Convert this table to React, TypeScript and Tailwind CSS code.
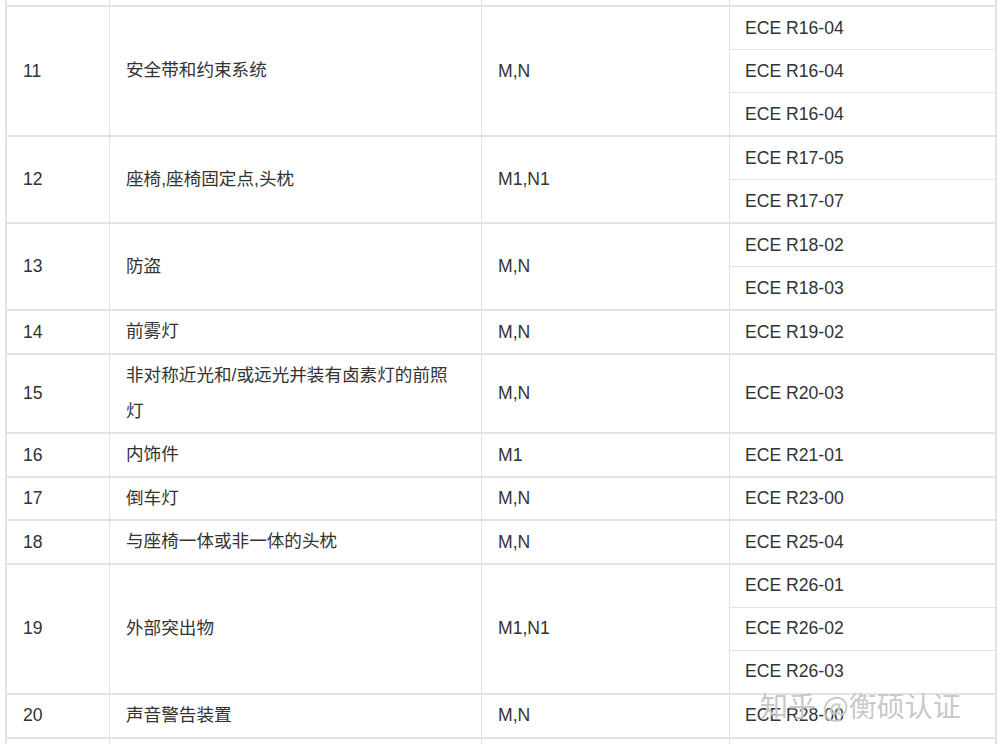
import React from "react";

type Row = { no: string; name: string[]; cat: string; ece: string[]; c?: string };

const rows: Row[] = [
  { no: "11", name: ["安全带和约束系统"], cat: "M,N", ece: ["ECE R16-04", "ECE R16-04", "ECE R16-04"] },
  { no: "12", name: ["座椅,座椅固定点,头枕"], cat: "M1,N1", ece: ["ECE R17-05", "ECE R17-07"] },
  { no: "13", name: ["防盗"], cat: "M,N", ece: ["ECE R18-02", "ECE R18-03"] },
  { no: "14", name: ["前雾灯"], cat: "M,N", ece: ["ECE R19-02"] },
  { no: "15", name: ["非对称近光和/或远光并装有卤素灯的前照", "灯"], cat: "M,N", ece: ["ECE R20-03"] },
  { no: "16", name: ["内饰件"], cat: "M1", ece: ["ECE R21-01"], c: "min-h-[41.5px]" },
  { no: "17", name: ["倒车灯"], cat: "M,N", ece: ["ECE R23-00"], c: "min-h-[41.5px]" },
  { no: "18", name: ["与座椅一体或非一体的头枕"], cat: "M,N", ece: ["ECE R25-04"], c: "min-h-[41.5px]" },
  { no: "19", name: ["外部突出物"], cat: "M1,N1", ece: ["ECE R26-01", "ECE R26-02", "ECE R26-03"] },
  { no: "20", name: ["声音警告装置"], cat: "M,N", ece: ["ECE R28-00"] },
];

const font = { fontFamily: '"Liberation Sans", "Noto Sans CJK SC", Arial, sans-serif' };

function Stub({ h }: { h: string }) {
  return (
    <div className={`flex ${h}`}>
      <div className="w-[103px] border-r border-[#e3e3e3]" />
      <div className="w-[372px] border-r border-[#e3e3e3]" />
      <div className="w-[248px] border-r border-[#e3e3e3]" />
      <div className="w-[265px]" />
    </div>
  );
}

export default function App() {
  return (
    <div className="w-[1006px] h-[744px] overflow-hidden bg-white relative" style={font}>
      <div className="ml-[5px] w-[992px] border-x-2 border-[#e3e3e3] text-[17.6px] text-[#333333]">
        <Stub h="h-[5px]" />
        {rows.map((r) => (
          <div key={r.no} className="flex border-t-2 border-[#e3e3e3]">
            <div className="w-[103px] shrink-0 border-r border-[#e3e3e3] flex items-center pl-[16px]">{r.no}</div>
            <div className="w-[372px] shrink-0 border-r border-[#e3e3e3] flex flex-col justify-center pl-[16px] py-[3px] leading-[35.5px]">
              {r.name.map((n, i) => (
                <div key={i}>{n}</div>
              ))}
            </div>
            <div className="w-[248px] shrink-0 border-r border-[#e3e3e3] flex items-center pl-[16px]">{r.cat}</div>
            <div className="w-[265px] shrink-0 flex flex-col">
              {r.ece.map((e, i) => (
                <div
                  key={i}
                  className={`flex-1 flex items-center pl-[15px] ${i > 0 ? "min-h-[43px] border-t border-[#e3e3e3]" : r.c ?? "min-h-[42px]"}`}
                >
                  {e}
                </div>
              ))}
            </div>
          </div>
        ))}
        <div className="border-t-2 border-[#e3e3e3]">
          <Stub h="h-[10px]" />
        </div>
      </div>
      <div
        className="absolute left-[760px] top-[688px] text-[28px] leading-[34px] text-[#b0b0b0]/70 whitespace-nowrap"
        style={{ fontFamily: '"Noto Sans CJK SC", sans-serif', textShadow: "0 0 1px rgba(255,255,255,0.9)" }}
      >
        知乎 @衡硕认证
      </div>
    </div>
  );
}
